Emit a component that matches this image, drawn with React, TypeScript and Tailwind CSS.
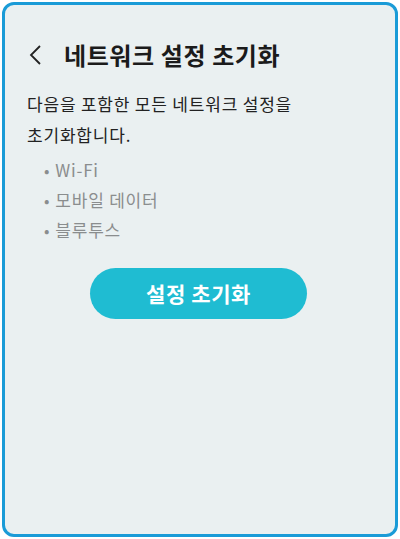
import React from 'react';

const items = ['Wi-Fi', '모바일 데이터', '블루투스'];

const App: React.FC = () => {
  return (
    <div className="w-[400px] h-[539px] bg-white p-[2px]" style={{ fontFamily: '"Noto Sans CJK KR", "Noto Sans", sans-serif' }}>
      <div className="h-[535px] w-[396px] rounded-[12px] border-[3px] border-[#1a9bd7] bg-[#eaf0f1] pl-[22px] pr-4 pt-[32px]">
        <div className="flex items-center h-[36px]">
          <svg width="16" height="22" viewBox="0 0 16 22" className="ml-[1px]">
            <path d="M12 2 L3 11 L12 20" fill="none" stroke="#222" strokeWidth="1.8" />
          </svg>
          <h1 className="ml-[20px] text-[24px] font-bold text-[#1b1b1b] tracking-[0.6px]">네트워크 설정 초기화</h1>
        </div>
        <p className="mt-[15px] text-[17px] leading-[31px] text-[#222] tracking-[0.8px]">
          다음을 포함한 모든 네트워크 설정을<br />초기화합니다.
        </p>
        <ul className="mt-[5px] pl-[17px] text-[17px] leading-[30px] text-[#8a8d8e] tracking-[0.8px]">
          {items.map(item => (
            <li key={item} className="flex items-center">
              <span className="mr-[5px] text-[16px]">•</span>
              {item}
            </li>
          ))}
        </ul>
        <div className="mt-[23px] flex">
          <button className="ml-[63px] h-[51px] w-[217px] rounded-full bg-[#1fbcd2] text-[21px] font-bold text-white tracking-[0.6px]">
            설정 초기화
          </button>
        </div>
      </div>
    </div>
  );
};

export default App;
